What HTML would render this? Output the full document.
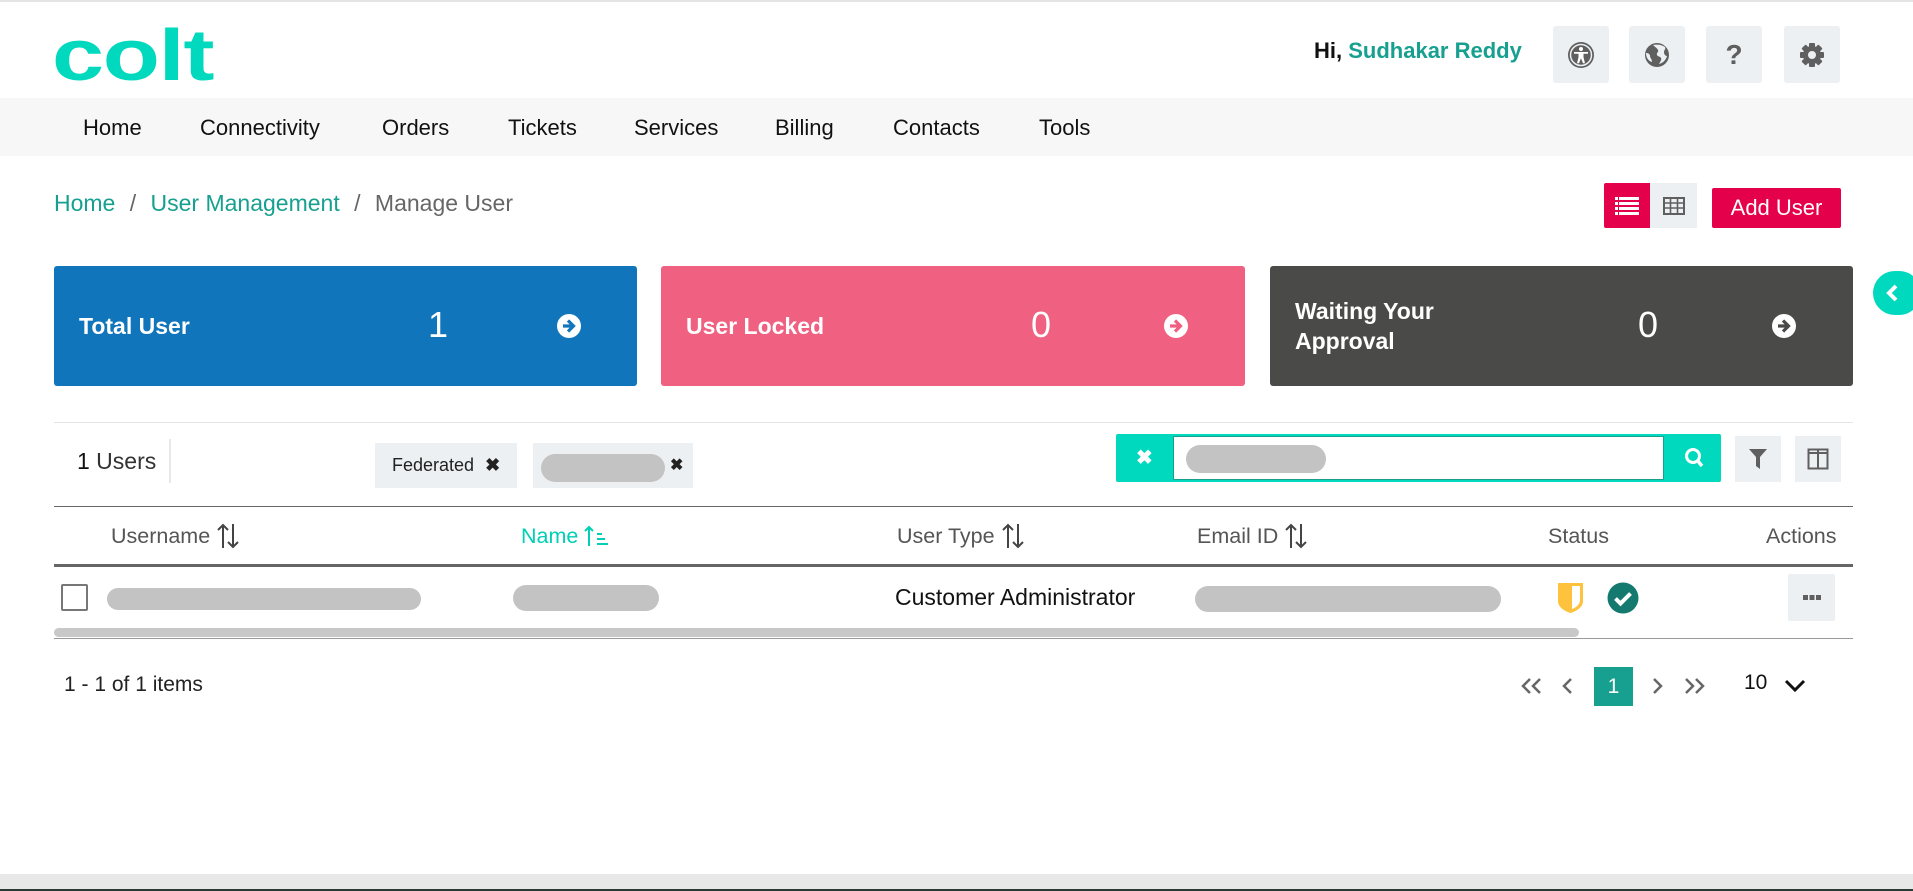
<!DOCTYPE html>
<html><head><meta charset="utf-8"><style>
*{box-sizing:border-box;margin:0;padding:0}
body{width:1913px;height:891px;position:relative;overflow:hidden;background:#fff;font-family:"Liberation Sans",sans-serif;color:#222}
.a{position:absolute}
.ib{position:absolute;top:26px;width:56px;height:57px;background:#edf0f3;border-radius:3px;display:flex;align-items:center;justify-content:center}
.nav span{position:absolute;top:115px;font-size:22px;color:#111}
.card{position:absolute;top:266px;height:120px;border-radius:3px;color:#fff}
.card .t{position:absolute;left:25px;top:50%;transform:translateY(-50%);font-size:23px;font-weight:bold;line-height:30px}
.card .n{position:absolute;top:50%;transform:translateY(-52%);font-size:36px;font-weight:300}
.card .ar{position:absolute;top:50%;transform:translateY(-50%);width:24px;height:24px}
.th{position:absolute;top:522px;height:28px;font-size:21.5px;color:#555;display:flex;align-items:center}
.th svg{margin-left:6px}
.sb{position:absolute;width:46px;height:46px;background:#edf0f3;display:flex;align-items:center;justify-content:center}
.blur{position:absolute;background:#c3c3c3;border-radius:14px}
</style></head><body>
<div class="a" style="left:0;top:0;width:1913px;height:2px;background:#e4e4e4"></div>
<div class="a" style="left:52px;top:14px;font-size:72px;font-weight:bold;color:#00d9be;letter-spacing:-1px;line-height:84px;transform:scaleX(1.3);transform-origin:left top">colt</div>
<div class="a" style="left:1314px;top:38px;font-size:22px;font-weight:bold;color:#111">Hi, <span style="color:#17a090">Sudhakar Reddy</span></div>
<div class="ib" style="left:1553px"><svg width="30" height="30" viewBox="0 0 30 30"><circle cx="15" cy="15" r="13" fill="#5f5f5f"/><circle cx="15" cy="15" r="10.5" fill="none" stroke="#edf0f3" stroke-width="1.5"/><circle cx="15" cy="9" r="2" fill="#fff"/><path d="M8 12h14v1.8h-4.5v3.5l1.5 6h-2l-2-5-2 5h-2l1.5-6v-3.5H8z" fill="#fff"/></svg></div>
<div class="ib" style="left:1629px"><svg width="28" height="28" viewBox="0 0 28 28"><circle cx="14" cy="14" r="12" fill="#5f5f5f"/><path d="M10 4c2 2 4 3 5 5s-2 3-1 5 3 1 4 3-1 4-2 6c4-1 7-4 8-8-2 0-3-2-3-4s2-3 1-5c-3-2-7-3-12-2zM3 12c2 0 4 1 4 3s2 3 2 6c-4-1-6-5-6-9z" fill="#edf0f3"/></svg></div>
<div class="ib" style="left:1706px;font-size:28px;font-weight:bold;color:#5f5f5f">?</div>
<div class="ib" style="left:1784px"><svg width="28" height="28" viewBox="0 0 28 28"><g fill="#5f5f5f"><circle cx="14" cy="14" r="9"/><rect x="11" y="2" width="6" height="24" rx="1"/><rect x="11" y="2" width="6" height="24" rx="1" transform="rotate(45 14 14)"/><rect x="11" y="2" width="6" height="24" rx="1" transform="rotate(90 14 14)"/><rect x="11" y="2" width="6" height="24" rx="1" transform="rotate(135 14 14)"/></g><circle cx="14" cy="14" r="4" fill="#edf0f3"/></svg></div>
<div class="a" style="left:0;top:98px;width:1913px;height:58px;background:#f7f7f7"></div>
<div class="nav"><span style="left:83px">Home</span><span style="left:200px">Connectivity</span><span style="left:382px">Orders</span><span style="left:508px">Tickets</span><span style="left:634px">Services</span><span style="left:775px">Billing</span><span style="left:893px">Contacts</span><span style="left:1039px">Tools</span></div>
<div class="a" style="left:54px;top:190px;font-size:23px;color:#17a090">Home <span style="color:#666;margin:0 8px">/</span> User Management <span style="color:#666;margin:0 8px">/</span> <span style="color:#666">Manage User</span></div>
<div class="a" style="left:1604px;top:183px;width:46px;height:45px;background:#e4004b;border-radius:2px 0 0 2px;display:flex;align-items:center;justify-content:center"><svg width="24" height="20" viewBox="0 0 24 20"><g fill="#fff"><rect x="0" y="1" width="3" height="3"/><rect x="4" y="1" width="20" height="3"/><rect x="0" y="6" width="3" height="3"/><rect x="4" y="6" width="20" height="3"/><rect x="0" y="11" width="3" height="3"/><rect x="4" y="11" width="20" height="3"/><rect x="0" y="16" width="3" height="3"/><rect x="4" y="16" width="20" height="3"/></g></svg></div>
<div class="a" style="left:1650px;top:183px;width:47px;height:45px;background:#edf0f3;display:flex;align-items:center;justify-content:center"><svg width="22" height="18" viewBox="0 0 22 18"><rect x="1" y="1" width="20" height="16" fill="none" stroke="#5f5f5f" stroke-width="2"/><path d="M1 6h20M1 11h20M7.5 1v16M14.5 1v16" stroke="#5f5f5f" stroke-width="1.6"/></svg></div>
<div class="a" style="left:1712px;top:188px;width:129px;height:40px;background:#e4004b;border-radius:2px;color:#fff;font-size:22px;text-align:center;line-height:40px">Add User</div>
<div class="card" style="left:54px;width:583px;background:#1175bb"><div class="t">Total User</div><div class="n" style="left:374px">1</div><svg class="ar" style="left:503px" viewBox="0 0 24 24"><circle cx="12" cy="12" r="12" fill="#fff"/><path d="M6 12h10M11 6.5l5.5 5.5-5.5 5.5" stroke="#1175bb" stroke-width="3.2" fill="none"/></svg></div>
<div class="card" style="left:661px;width:584px;background:#f06080"><div class="t">User Locked</div><div class="n" style="left:370px">0</div><svg class="ar" style="left:503px" viewBox="0 0 24 24"><circle cx="12" cy="12" r="12" fill="#fff"/><path d="M6 12h10M11 6.5l5.5 5.5-5.5 5.5" stroke="#f06080" stroke-width="3.2" fill="none"/></svg></div>
<div class="card" style="left:1270px;width:583px;background:#4a4b49"><div class="t">Waiting Your<br>Approval</div><div class="n" style="left:368px">0</div><svg class="ar" style="left:502px" viewBox="0 0 24 24"><circle cx="12" cy="12" r="12" fill="#fff"/><path d="M6 12h10M11 6.5l5.5 5.5-5.5 5.5" stroke="#4a4b49" stroke-width="3.2" fill="none"/></svg></div>
<div class="a" style="left:1873px;top:271px;width:48px;height:44px;border-radius:22px;background:#00d9be"><svg class="a" style="left:12px;top:12px" width="14" height="20" viewBox="0 0 14 20"><path d="M11 3l-7 7 7 7" stroke="#fff" stroke-width="4" fill="none"/></svg></div>
<div class="a" style="left:54px;top:422px;width:1799px;height:1px;background:#e2e4e8"></div>
<div class="a" style="left:77px;top:448px;font-size:23px;color:#333"><b style="font-weight:normal;color:#111">1</b> Users</div>
<div class="a" style="left:169px;top:439px;width:2px;height:44px;background:#e8e8e8"></div>
<div class="a" style="left:375px;top:443px;width:142px;height:45px;background:#edf0f3;font-size:18px;line-height:45px;padding-left:17px;color:#222">Federated <b style="margin-left:6px">✖</b></div>
<div class="a" style="left:533px;top:443px;width:160px;height:45px;background:#edf0f3"><div class="blur" style="left:8px;top:11px;width:124px;height:28px"></div><b class="a" style="left:137px;top:12px;font-size:16px">✖</b></div>
<div class="a" style="left:1116px;top:434px;width:605px;height:48px;background:#00d9be;border-radius:2px"></div>
<div class="a" style="left:1173px;top:436px;width:491px;height:44px;background:#fff;border:1px solid #17a090"><div class="blur" style="left:12px;top:8px;width:140px;height:28px"></div></div>
<div class="a" style="left:1136px;top:445px;color:#fff;font-size:20px;font-weight:bold">✖</div>
<svg class="a" style="left:1684px;top:447px" width="20" height="22" viewBox="0 0 20 22"><circle cx="9" cy="9" r="6.5" stroke="#fff" stroke-width="3" fill="none"/><path d="M13 13l5 6" stroke="#fff" stroke-width="3.5"/></svg>
<div class="sb" style="left:1735px;top:436px"><svg width="18" height="20" viewBox="0 0 18 20"><path d="M0 0h18l-7 8v12l-4-3V8z" fill="#5f5f5f"/></svg></div>
<div class="sb" style="left:1795px;top:436px"><svg width="22" height="22" viewBox="0 0 22 22"><rect x="1.5" y="1.5" width="19" height="19" fill="none" stroke="#5f5f5f" stroke-width="2"/><path d="M11 1.5v19M1.5 5h19" stroke="#5f5f5f" stroke-width="2"/></svg></div>
<div class="a" style="left:54px;top:506px;width:1799px;height:1px;background:#666"></div>
<div class="th" style="left:111px">Username<svg width="24" height="26" viewBox="0 0 24 26"><path d="M7 25V2M2 7l5-5 5 5M17 1v23M12 19l5 5 5-5" stroke="#444" stroke-width="2" fill="none"/></svg></div>
<div class="th" style="left:521px;color:#00d0b5">Name<svg width="26" height="22" viewBox="0 0 26 22"><path d="M5 21V2M1 6l4-4 4 4" stroke="#00d0b5" stroke-width="2" fill="none"/><path d="M13 9h5M13 14h8M13 19h11" stroke="#00d0b5" stroke-width="2"/></svg></div>
<div class="th" style="left:897px">User Type<svg width="24" height="26" viewBox="0 0 24 26"><path d="M7 25V2M2 7l5-5 5 5M17 1v23M12 19l5 5 5-5" stroke="#444" stroke-width="2" fill="none"/></svg></div>
<div class="th" style="left:1197px">Email ID<svg width="24" height="26" viewBox="0 0 24 26"><path d="M7 25V2M2 7l5-5 5 5M17 1v23M12 19l5 5 5-5" stroke="#444" stroke-width="2" fill="none"/></svg></div>
<div class="th" style="left:1548px">Status</div>
<div class="th" style="left:1766px">Actions</div>
<div class="a" style="left:54px;top:564px;width:1799px;height:3px;background:#666"></div>
<div class="a" style="left:61px;top:584px;width:27px;height:27px;border:2px solid #777;border-radius:2px"></div>
<div class="blur" style="left:107px;top:588px;width:314px;height:22px"></div>
<div class="blur" style="left:513px;top:585px;width:146px;height:26px"></div>
<div class="a" style="left:895px;top:584px;font-size:23px;color:#111">Customer Administrator</div>
<div class="blur" style="left:1195px;top:586px;width:306px;height:26px"></div>
<svg class="a" style="left:1557px;top:582px" width="27" height="32" viewBox="0 0 27 32"><path d="M1 1h25v18c0 6-6 10-12.5 12C7 29 1 25 1 19z" fill="#ffc23d"/><path d="M15 4h8v14c0 4-3 7-8 9z" fill="#fff"/></svg>
<svg class="a" style="left:1607px;top:582px" width="32" height="32" viewBox="0 0 32 32"><circle cx="16" cy="16" r="15.5" fill="#147a70"/><path d="M8.5 16.5l5 5 10-10" stroke="#fff" stroke-width="4" fill="none"/></svg>
<div class="a" style="left:1788px;top:574px;width:47px;height:47px;background:#edf0f3;border-radius:2px"><div class="a" style="left:15px;top:21px;width:18px;height:5px;background:repeating-linear-gradient(90deg,#5f5f5f 0 5px,transparent 5px 6.5px)"></div></div>
<div class="a" style="left:54px;top:628px;width:1525px;height:9px;background:#c8c8c8;border-radius:5px"></div>
<div class="a" style="left:54px;top:638px;width:1799px;height:1px;background:#999"></div>
<div class="a" style="left:64px;top:673px;font-size:21px;color:#222">1 - 1 of 1 items</div>
<svg class="a" style="left:1520px;top:676px" width="24" height="20" viewBox="0 0 24 20"><path d="M10 3l-7 7 7 7M20 3l-7 7 7 7" stroke="#666" stroke-width="2.5" fill="none"/></svg>
<svg class="a" style="left:1561px;top:676px" width="14" height="20" viewBox="0 0 14 20"><path d="M10 3l-7 7 7 7" stroke="#666" stroke-width="2.5" fill="none"/></svg>
<div class="a" style="left:1594px;top:667px;width:39px;height:39px;background:#17a090;color:#fff;font-size:21px;text-align:center;line-height:39px">1</div>
<svg class="a" style="left:1650px;top:676px" width="14" height="20" viewBox="0 0 14 20"><path d="M4 3l7 7-7 7" stroke="#666" stroke-width="2.5" fill="none"/></svg>
<svg class="a" style="left:1682px;top:676px" width="24" height="20" viewBox="0 0 24 20"><path d="M4 3l7 7-7 7M14 3l7 7-7 7" stroke="#666" stroke-width="2.5" fill="none"/></svg>
<div class="a" style="left:1744px;top:671px;font-size:21px;color:#111">10</div>
<svg class="a" style="left:1784px;top:679px" width="22" height="14" viewBox="0 0 22 14"><path d="M2 2l9 9 9-9" stroke="#111" stroke-width="3" fill="none"/></svg>
<div class="a" style="left:0;top:874px;width:1913px;height:17px;background:#e8e8e8"></div>
<div class="a" style="left:0;top:889px;width:1913px;height:2px;background:#2a3a35"></div>
</body></html>
